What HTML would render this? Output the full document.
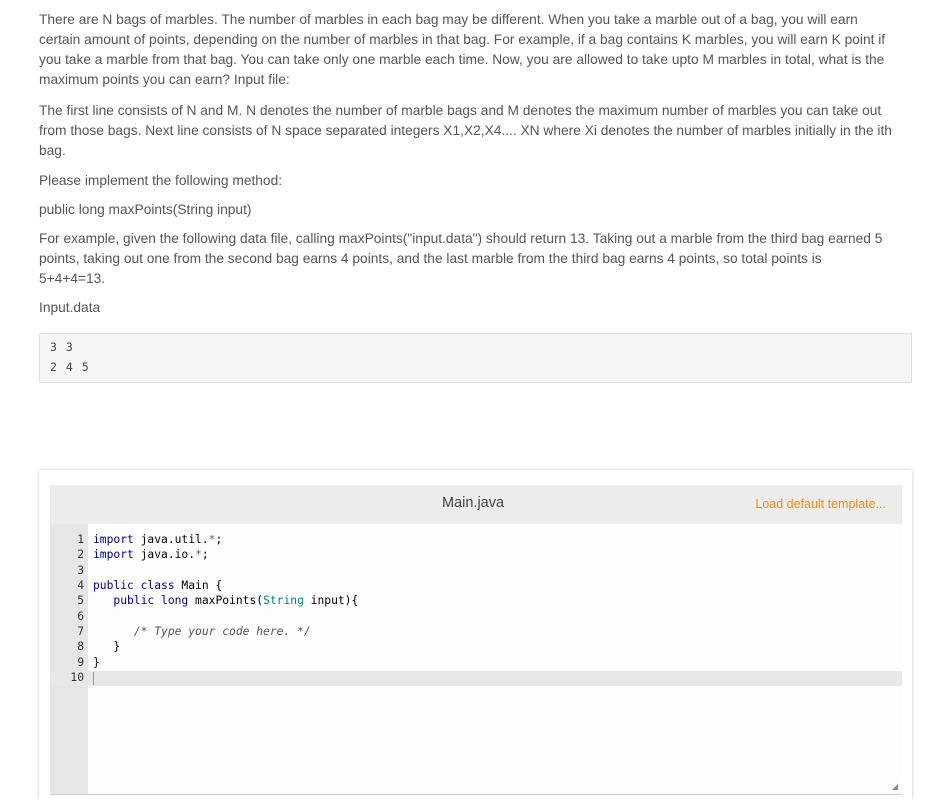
<!DOCTYPE html>
<html><head><meta charset="utf-8"><style>
body{margin:0;background:#fff;width:938px;height:796px;overflow:hidden;font-family:"Liberation Sans",Arial,sans-serif;color:#555;font-size:13.75px;}
.t{position:absolute;left:39px;white-space:nowrap;line-height:20px;}
.pre{position:absolute;left:39px;top:333px;width:871px;height:48px;background:#f5f5f5;border:1px solid #ddd;border-radius:2px;font-family:"DejaVu Sans Mono",monospace;font-size:11.5px;line-height:20px;color:#444;word-spacing:2px;}
.panel{position:absolute;left:39px;top:470px;width:873px;height:330px;background:#fff;box-shadow:-1px 0 3px rgba(0,0,0,.12),1px 0 3px rgba(0,0,0,.12);}
.hdr{position:absolute;left:50px;top:485px;width:852px;height:39px;background:#ececec;}
.code{position:absolute;left:50px;top:524px;width:852px;height:270px;background:#fdfdfd;border-bottom:1px solid #ccc;}
.gut{position:absolute;left:0;top:0;width:38px;height:270px;background:#e6e6e6;}
.ln{position:absolute;left:0;width:34px;text-align:right;font-family:"DejaVu Sans Mono",monospace;font-size:11.3px;color:#333;}
.cl{position:absolute;left:43px;font-family:"DejaVu Sans Mono",monospace;font-size:11.3px;color:#000;white-space:pre;}
.k{color:#00008b}.c{color:#555;font-style:italic}.s{color:#008080}.o{color:#666}
</style></head><body>
<div class="t" style="top:10px">There are N bags of marbles. The number of marbles in each bag may be different. When you take a marble out of a bag, you will earn<br>certain amount of points, depending on the number of marbles in that bag. For example, if a bag contains K marbles, you will earn K point if<br>you take a marble from that bag. You can take only one marble each time. Now, you are allowed to take upto M marbles in total, what is the<br>maximum points you can earn? Input file:</div>
<div class="t" style="top:101px">The first line consists of N and M. N denotes the number of marble bags and M denotes the maximum number of marbles you can take out<br>from those bags. Next line consists of N space separated integers X1,X2,X4.... XN where Xi denotes the number of marbles initially in the ith<br>bag.</div>
<div class="t" style="top:171px">Please implement the following method:</div>
<div class="t" style="top:200px">public long maxPoints(String input)</div>
<div class="t" style="top:229px">For example, given the following data file, calling maxPoints("input.data") should return 13. Taking out a marble from the third bag earned 5<br>points, taking out one from the second bag earns 4 points, and the last marble from the third bag earns 4 points, so total points is<br>5+4+4=13.</div>
<div class="t" style="top:298px">Input.data</div>
<div class="pre"><div style="position:absolute;left:10px;top:3px">3 3<br>2 4 5</div></div>
<div class="panel"></div>
<div class="hdr"><div style="position:absolute;left:392px;top:10px;font-size:14.5px;color:#444">Main.java</div><div style="position:absolute;right:16px;top:12px;font-size:12.5px;color:#f08a24">Load default template...</div></div>
<div class="code"><div class="gut"></div>
<div style="position:absolute;left:0;top:147px;width:852px;height:15px;background:#e8e8e8"></div>
<div class="ln" style="top:9px">1</div><div class="ln" style="top:24px">2</div><div class="ln" style="top:40px">3</div><div class="ln" style="top:55px">4</div><div class="ln" style="top:70px">5</div><div class="ln" style="top:86px">6</div><div class="ln" style="top:101px">7</div><div class="ln" style="top:116px">8</div><div class="ln" style="top:132px">9</div><div class="ln" style="top:147px">10</div>
<div class="cl" style="top:9px"><span class="k">import</span> java.util.<span class="o">*</span>;</div>
<div class="cl" style="top:24px"><span class="k">import</span> java.io.<span class="o">*</span>;</div>
<div class="cl" style="top:55px"><span class="k">public class</span> Main {</div>
<div class="cl" style="top:70px">   <span class="k">public long</span> maxPoints(<span class="s">String</span> input){</div>
<div class="cl" style="top:101px">      <span class="c">/* Type your code here. */</span></div>
<div class="cl" style="top:116px">   }</div>
<div class="cl" style="top:132px">}</div>
<div style="position:absolute;left:43px;top:148px;width:1px;height:13px;background:#999"></div>
<div style="position:absolute;right:4px;bottom:3px;font-size:8px;color:#888">◢</div>
</div>
</body></html>
